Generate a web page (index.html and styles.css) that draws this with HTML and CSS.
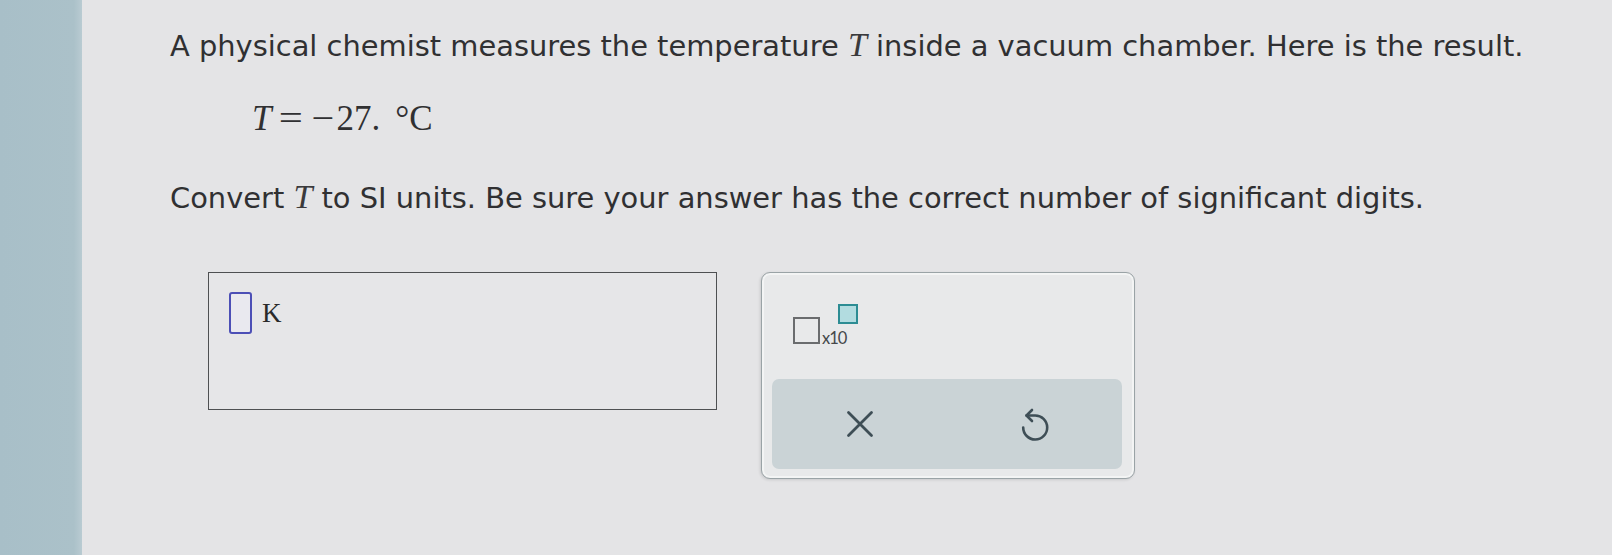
FILE: index.html
```html
<!DOCTYPE html>
<html lang="en">
<head>
<meta charset="utf-8">
<title>Temperature conversion</title>
<link rel="stylesheet" href="styles.css">
</head>
<body>
<div class="page">
  <div class="strip"></div>
  <main class="content">
    <p class="q line1">A physical chemist measures the temperature <i class="mv">T</i> inside a vacuum chamber. Here is the result.</p>
    <p class="eq"><i class="eq-t">T</i><span class="eq-op">=</span><span class="eq-minus">−</span><span class="eq-num">27.</span><span class="eq-unit">°C</span></p>
    <p class="q line3">Convert <i class="mv">T</i> to SI units. Be sure your answer has the correct number of significant digits.</p>
    <div class="answer-row">
      <div class="answer-box">
        <span class="slot"></span><span class="unit">K</span>
      </div>
      <div class="tools">
        <div class="sci">
          <span class="sci-box"></span><span class="sci-x">x10</span><span class="sci-exp"></span>
        </div>
        <div class="actions">
          <button class="act" aria-label="Clear">
            <svg width="28" height="28" viewBox="0 0 28 28"><path d="M2.5 2.5 L25.5 25.5 M25.5 2.5 L2.5 25.5" fill="none" stroke="#3e4e56" stroke-width="2.8" stroke-linecap="round"/></svg>
          </button>
          <button class="act" aria-label="Undo">
            <svg width="32" height="34" viewBox="0 0 32 34"><path d="M7.5 8.5 H16 A12 12 0 1 1 4.2 20.5" fill="none" stroke="#3e4e56" stroke-width="2.6" stroke-linecap="round"/><path d="M13 3 L7.5 8.5 L13 14" fill="none" stroke="#3e4e56" stroke-width="2.6" stroke-linecap="round" stroke-linejoin="round"/></svg>
          </button>
        </div>
      </div>
    </div>
  </main>
</div>
</body>
</html>
```
FILE: styles.css
```css
html, body {
  margin: 0;
  padding: 0;
}
body {
  width: 1612px;
  height: 555px;
  overflow: hidden;
  background: #e4e4e6;
}
.page {
  display: flex;
  height: 555px;
}
.strip {
  width: 82px;
  flex: none;
  background: linear-gradient(90deg, #a8bfc8 0%, #abc1c9 90%, #b9cbd2 100%);
}
.content {
  flex: 1;
  padding: 29px 0 0 88px;
  background: #e4e4e6;
  color: #303032;
}
.q {
  margin: 0;
  font-family: "DejaVu Sans", Verdana, sans-serif;
  font-size: 28.9px;
  line-height: 34px;
  white-space: nowrap;
}
.mv {
  font-family: "Liberation Serif", "Times New Roman", serif;
  font-style: italic;
  font-size: 34px;
  line-height: 0;
  color: #3a3a3c;
}
.eq {
  margin: 36px 0 0 82px;
  font-family: "Liberation Serif", "Times New Roman", serif;
  font-size: 35px;
  line-height: 40px;
  height: 40px;
  color: #303032;
  display: flex;
  align-items: baseline;
}
.eq-t { font-style: italic; }
.eq-op {
  display: inline-block;
  margin-left: 9.5px;
  transform: scaleX(1.22);
}
.eq-minus {
  display: inline-block;
  margin-left: 12px;
  transform: scaleX(1.15);
}
.eq-num { margin-left: 4px; }
.eq-unit { margin-left: 15px; }
.line3 {
  margin-top: 42px;
}
.answer-row {
  display: flex;
  align-items: flex-start;
  gap: 44px;
  margin: 57px 0 0 38px;
}
.answer-box {
  box-sizing: border-box;
  width: 509px;
  height: 138px;
  border: 1px solid #4e5052;
  background: #e6e6e8;
  display: flex;
  align-items: flex-start;
  padding: 19px 0 0 20px;
}
.slot {
  width: 23px;
  height: 42px;
  box-sizing: border-box;
  border: 2px solid #4c4fb6;
  border-radius: 3px;
  background: #e9e9ef;
}
.unit {
  font-family: "Liberation Serif", "Times New Roman", serif;
  font-size: 27px;
  line-height: 30px;
  margin: 6px 0 0 10px;
  color: #2a2a2a;
}
.tools {
  width: 374px;
  height: 207px;
  box-sizing: border-box;
  border: 1px solid #9aa3a6;
  border-radius: 9px;
  background: #e8e9ea;
  box-shadow: inset 0 0 0 2px #f3f4f4, -1px 1px 3px rgba(0,0,0,0.12);
  padding: 30px 12px 9px 10px;
  display: flex;
  flex-direction: column;
}
.sci {
  display: flex;
  align-items: flex-start;
  margin-left: 21px;
  height: 48px;
}
.sci-box {
  width: 27px;
  height: 27px;
  box-sizing: border-box;
  border: 2px solid #6a6c6e;
  margin-top: 14px;
}
.sci-x {
  font-family: Lato, "Open Sans", sans-serif;
  font-size: 16.5px;
  line-height: 16px;
  margin-top: 27px;
  margin-left: 2px;
  color: #45484a;
  letter-spacing: -1px;
}
.sci-exp {
  width: 20px;
  height: 20px;
  box-sizing: border-box;
  border: 2px solid #2c8c93;
  background: #b2dce0;
  margin-left: -8px;
  margin-top: 1px;
}
.actions {
  margin-top: auto;
  height: 90px;
  border-radius: 7px;
  background: #cad3d6;
  display: grid;
  grid-template-columns: 1fr 1fr;
}
.act {
  border: 0;
  background: transparent;
  display: flex;
  align-items: center;
  justify-content: center;
  padding: 0;
}
```
